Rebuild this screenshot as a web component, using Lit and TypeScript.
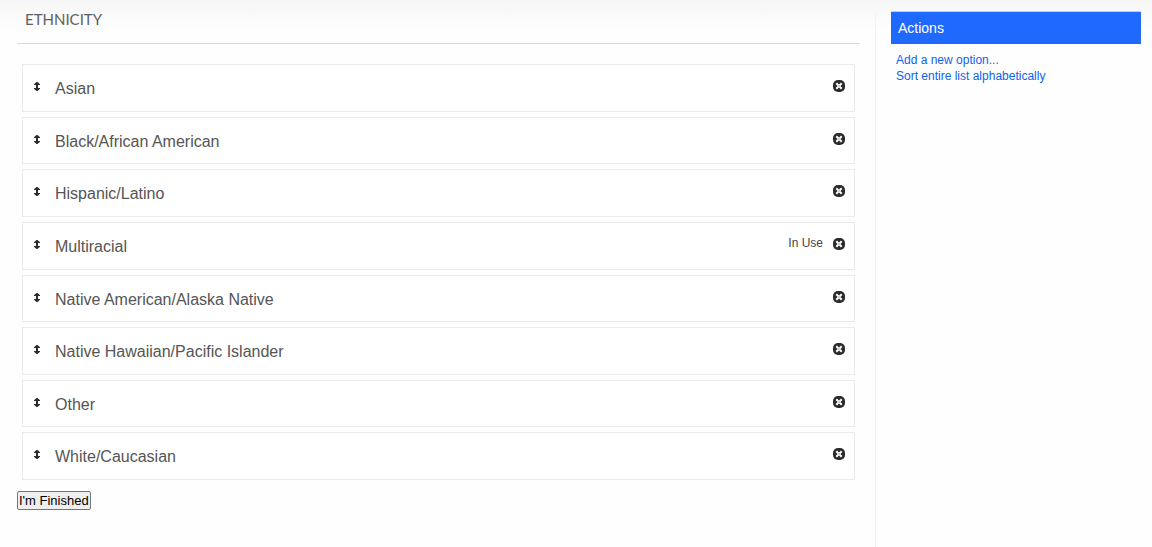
import { LitElement, html, css, nothing } from "lit";
import { customElement, property, state } from "lit/decorators.js";

interface Option {
  name: string;
  inUse?: boolean;
}

@customElement("option-row")
class OptionRow extends LitElement {
  @property() name = "";
  @property({ type: Boolean }) inUse = false;

  static styles = css`
    :host {
      display: block;
      box-sizing: border-box;
      border: 1px solid #ebebeb;
      background: #fff;
    }
    .row {
      display: flex;
      align-items: flex-start;
      padding: 13px 9px 0 10px;
    }
    button {
      display: block;
      padding: 0;
      border: 0;
      background: none;
      color: #2b2b2b;
    }
    svg {
      display: block;
      fill: currentColor;
    }
    .move {
      margin-top: 3px;
      margin-right: 14px;
      cursor: move;
    }
    .remove {
      margin-top: 2px;
      cursor: pointer;
    }
    .name {
      flex: 1;
      font-size: 16px;
      line-height: 22px;
      color: #555;
    }
    .status {
      margin-right: 10px;
      font-size: 12px;
      line-height: 14px;
      color: #444;
    }
  `;

  render() {
    return html`
      <div class="row">
        <button class="move" aria-label="Move ${this.name}">
          <svg width="8" height="11" viewBox="0 0 8 11">
            <path d="M3.5 1H4.5L7 3.2V4H5V7H7V7.8L4.5 10H3.5L1 7.8V7H3V4H1V3.2Z" />
          </svg>
        </button>
        <span class="name">${this.name}</span>
        ${this.inUse ? html`<span class="status">In Use</span>` : nothing}
        <button class="remove" aria-label="Remove ${this.name}">
          <svg width="12" height="12" viewBox="0 0 12 12">
            <rect width="12" height="12" rx="5" />
            <path d="M4 4L8 8M8 4L4 8" stroke="#fff" stroke-width="2" stroke-linecap="square" />
            <rect x="5.4" y="5.4" width="1.2" height="1.2" fill="#777" />
          </svg>
        </button>
      </div>
    `;
  }
}

@customElement("app-root")
class AppRoot extends LitElement {
  @state() private options: Option[] = [
    { name: "Asian" },
    { name: "Black/African American" },
    { name: "Hispanic/Latino" },
    { name: "Multiracial", inUse: true },
    { name: "Native American/Alaska Native" },
    { name: "Native Hawaiian/Pacific Islander" },
    { name: "Other" },
    { name: "White/Caucasian" },
  ];

  static styles = css`
    :host {
      display: flex;
      box-sizing: border-box;
      min-height: 100vh;
      padding: 0 11px 0 17px;
      background: linear-gradient(#f6f6f6, #fefefe 30px);
      font-family: "Liberation Sans", Arial, sans-serif;
    }
    main {
      flex: 1;
      margin-right: 15px;
    }
    h1 {
      margin: 0;
      padding: 7px 8px 12px;
      border-bottom: 1px solid #d8d8d8;
      font: 400 15px/24px Lato, sans-serif;
      color: #606060;
    }
    .options {
      display: grid;
      grid-auto-rows: 1fr;
      gap: 5px;
      min-height: 416px;
      margin: 20px 5px 11px;
    }
    .finish {
      display: block;
      padding: 1px;
      border: 1px solid #767676;
      border-radius: 2px;
      background: #efefef;
      color: #000;
      font: 13px/15px "Liberation Sans", Arial, sans-serif;
    }
    aside {
      flex: 0 0 250px;
      margin-top: 11px;
      padding-left: 15px;
      border-left: 1px solid #f3f3f3;
    }
    h2 {
      margin: 0;
      padding: 6px 7px;
      border-top: 1px solid #c8ccd6;
      background: #1f69ff;
      color: #fff;
      font-size: 14px;
      font-weight: 400;
      line-height: 20px;
    }
    nav {
      display: flex;
      flex-direction: column;
      align-items: flex-start;
      padding: 8px 5px;
    }
    a {
      color: #0f62ee;
      font-size: 12px;
      line-height: 16px;
      text-decoration: none;
    }
  `;

  render() {
    return html`
      <main>
        <h1>ETHNICITY</h1>
        <div class="options">
          ${this.options.map(
            (o) => html`<option-row .name=${o.name} .inUse=${!!o.inUse}></option-row>`
          )}
        </div>
        <button class="finish">I'm Finished</button>
      </main>
      <aside>
        <h2>Actions</h2>
        <nav>
          <a href="#add">Add a new option...</a>
          <a href="#sort">Sort entire list alphabetically</a>
        </nav>
      </aside>
    `;
  }
}
